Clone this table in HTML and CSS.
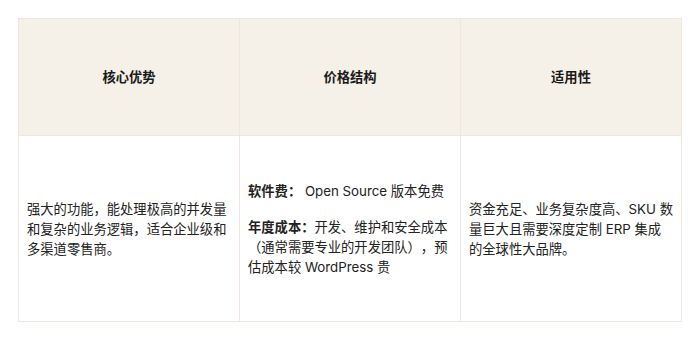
FILE: index.html
```html
<!DOCTYPE html>
<html lang="zh">
<head>
<meta charset="utf-8">
<link rel="stylesheet" href="styles.css">
</head>
<body>
<table class="compare">
  <thead>
    <tr>
      <th>核心优势</th>
      <th>价格结构</th>
      <th>适用性</th>
    </tr>
  </thead>
  <tbody>
    <tr>
      <td>强大的功能，能处理极高的并发量和复杂的业务逻辑，适合企业级和多渠道零售商。</td>
      <td>
        <p><strong>软件费：</strong> Open Source 版本免费</p>
        <p><strong>年度成本：</strong>开发、维护和安全成本（通常需要专业的开发团队），预估成本较 WordPress 贵</p>
      </td>
      <td>资金充足、业务复杂度高、SKU 数量巨大且需要深度定制 ERP 集成的全球性大品牌。</td>
    </tr>
  </tbody>
</table>
</body>
</html>
```
FILE: styles.css
```css
html, body {
  margin: 0;
  padding: 0;
  background: #fff;
}
body {
  padding: 18px;
  font-family: Inter, "Noto Sans CJK SC", sans-serif;
  font-size: 13.3px;
  line-height: 20px;
  color: #222;
  text-spacing-trim: space-all;
}
.compare {
  width: 664px;
  border-collapse: collapse;
  table-layout: fixed;
}
.compare th,
.compare td {
  border: 1px solid #efe7dd;
  padding: 0 8px;
  vertical-align: middle;
}
.compare th {
  background: #f5f0e8;
  height: 116px;
  font-weight: 700;
  text-align: center;
  color: #1a1a1a;
}
.compare td {
  height: 185px;
  text-align: left;
}
.compare p {
  margin: 16px 0;
}
.compare strong {
  font-weight: 700;
}
```
